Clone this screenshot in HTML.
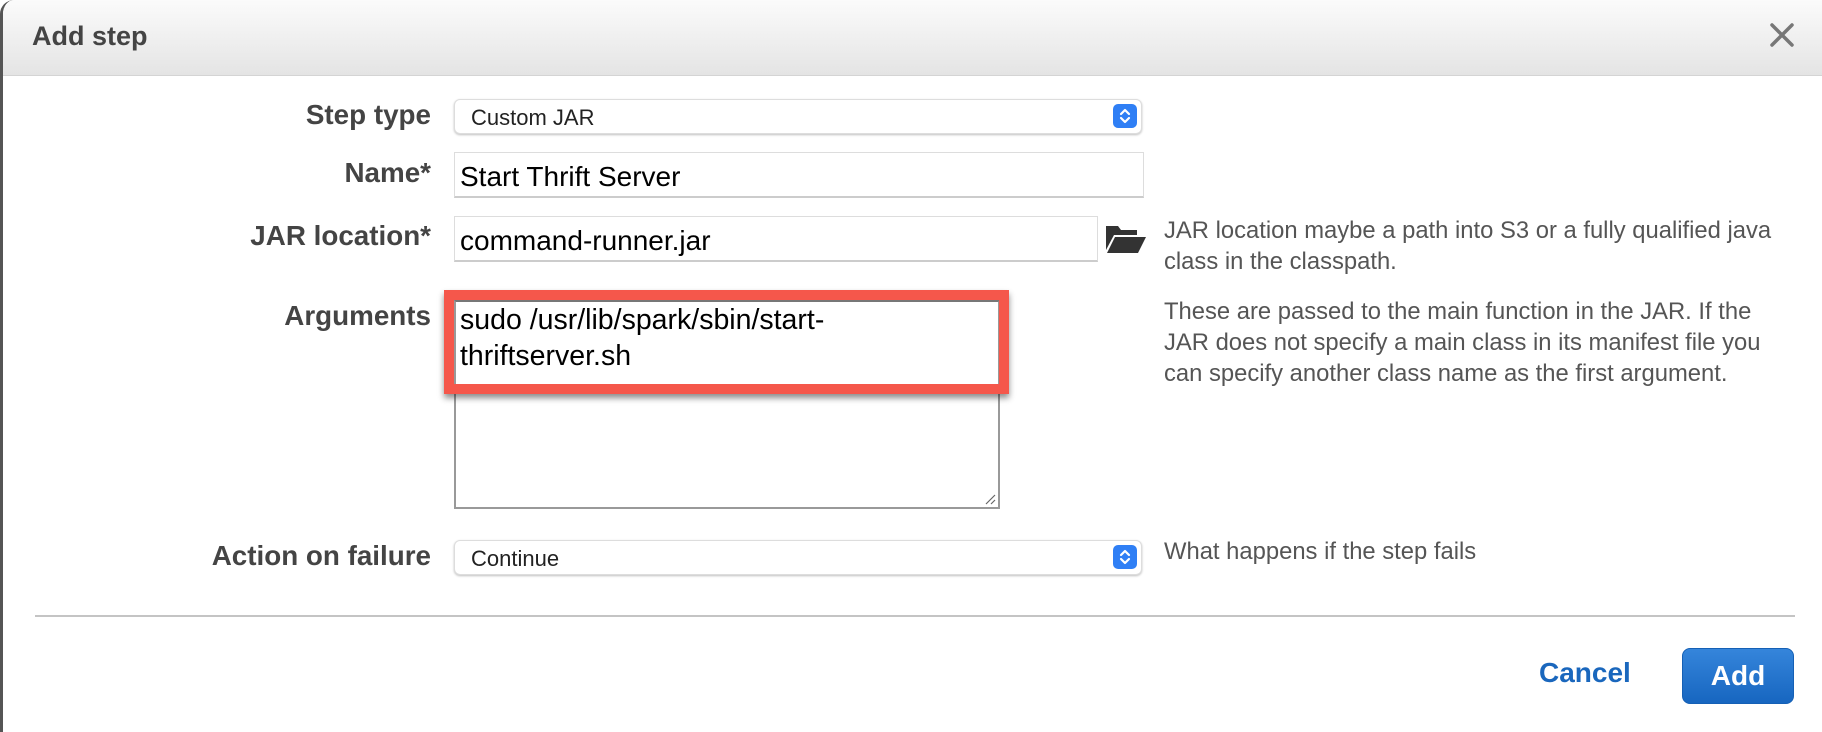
<!DOCTYPE html>
<html><head><meta charset="utf-8"><style>
*{box-sizing:border-box;margin:0;padding:0}
body{width:1822px;height:732px;overflow:hidden;background:#fff;font-family:"Liberation Sans",Arial,sans-serif;position:relative}
.dlg{position:absolute;left:0;top:0;width:1822px;height:732px;border-left:3px solid #555;border-radius:14px 0 0 0;background:#fff;overflow:hidden}
.hdr{position:absolute;left:0;top:0;width:100%;height:76px;background:linear-gradient(#fbfbfb,#e4e4e4);border-bottom:1px solid #d4d4d4}
.hdr h1{position:absolute;left:29px;top:21px;font-size:27px;font-weight:bold;color:#444}
.lbl{position:absolute;right:1391px;font-size:27.8px;font-weight:bold;color:#444;white-space:nowrap}
.sel{position:absolute;left:451px;width:688px;height:35px;border:1px solid #ddd;border-radius:6px;box-shadow:0 1px 2px rgba(0,0,0,.25);font-size:22px;color:#222;padding:5px 0 0 16px;background:#fff}
.knob{position:absolute;right:4px;top:4px;width:24px;height:24px;background:#2f7ff5;border-radius:5px}
.inp{position:absolute;left:451px;height:46px;border:1px solid #ddd;border-bottom:2px solid #ccc;font-size:28px;color:#000;padding:8px 0 0 5px;background:#fff;white-space:nowrap}
.help{position:absolute;left:1161px;font-size:23.8px;color:#555;line-height:31px;white-space:nowrap}
</style></head><body>
<div class="dlg">
<div class="hdr"><h1>Add step</h1>
<svg style="position:absolute;left:1766px;top:22px" width="26" height="26" viewBox="0 0 26 26"><path d="M3 3L23 23M23 3L3 23" stroke="#777" stroke-width="3.5" stroke-linecap="round"/></svg></div>

<div class="lbl" style="top:99px">Step type</div>
<div class="sel" style="top:99px">Custom JAR<div class="knob"><svg width="24" height="24" viewBox="0 0 24 24"><path d="M8 10l4-4 4 4M8 14l4 4 4-4" stroke="#fff" stroke-width="2.2" fill="none" stroke-linecap="round" stroke-linejoin="round"/></svg></div></div>

<div class="lbl" style="top:157px">Name*</div>
<div class="inp" style="top:152px;width:690px">Start Thrift Server</div>

<div class="lbl" style="top:220px">JAR location*</div>
<div class="inp" style="top:216px;width:644px">command-runner.jar</div>
<svg style="position:absolute;left:1102px;top:224px" width="42" height="30" viewBox="0 0 42 30"><path d="M1 2h12l3 4h16v5H9L1 26z" fill="#333"/><path d="M10 13h31l-8 16H2z" fill="#333"/></svg>
<div class="help" style="top:215px">JAR location maybe a path into S3 or a fully qualified java<br>class in the classpath.</div>

<div class="lbl" style="top:300px">Arguments</div>
<div style="position:absolute;left:451px;top:300px;width:546px;height:209px;border:2px solid #999;border-top-color:#777;background:#fff"></div>
<svg style="position:absolute;left:981px;top:493px" width="12" height="12"><path d="M2 11L11 2M7 11L11 7" stroke="#666" stroke-width="1.2"/></svg>
<div style="position:absolute;left:441px;top:290px;width:565px;height:104px;border:10px solid #f5574b;box-shadow:0 4px 6px rgba(0,0,0,.45)"></div>
<div style="position:absolute;left:457px;top:302px;font-size:28.5px;line-height:36px;color:#000">sudo /usr/lib/spark/sbin/start-<br>thriftserver.sh</div>
<div class="help" style="top:296px">These are passed to the main function in the JAR. If the<br>JAR does not specify a main class in its manifest file you<br>can specify another class name as the first argument.</div>

<div class="lbl" style="top:540px">Action on failure</div>
<div class="sel" style="top:540px">Continue<div class="knob"><svg width="24" height="24" viewBox="0 0 24 24"><path d="M8 10l4-4 4 4M8 14l4 4 4-4" stroke="#fff" stroke-width="2.2" fill="none" stroke-linecap="round" stroke-linejoin="round"/></svg></div></div>
<div class="help" style="top:536px">What happens if the step fails</div>

<div style="position:absolute;left:32px;top:615px;width:1760px;height:2px;background:#c4c4c4"></div>
<div style="position:absolute;left:1536px;top:657px;font-size:28px;font-weight:bold;color:#1a67bd">Cancel</div>
<div style="position:absolute;left:1679px;top:648px;width:112px;height:56px;border-radius:8px;background:linear-gradient(#3585db,#1766c0);border:1px solid #1560b5;color:#fff;font-size:28px;font-weight:bold;text-align:center;line-height:54px">Add</div>
</div>
</body></html>
